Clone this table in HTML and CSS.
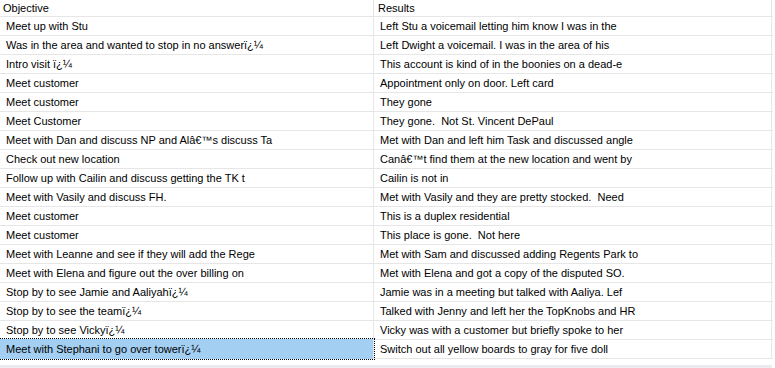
FILE: index.html
```html
<!DOCTYPE html>
<html>
<head>
<meta charset="utf-8">
<link rel="stylesheet" href="styles.css">
</head>
<body>
<div class="grid">
  <div class="row head"><div class="cell">Objective</div><div class="cell">Results</div></div>
  <div class="row"><div class="cell">Meet up with Stu</div><div class="cell">Left Stu a voicemail letting him know I was in the</div></div>
  <div class="row"><div class="cell">Was in the area and wanted to stop in no answerï¿¼</div><div class="cell">Left Dwight a voicemail. I was in the area of his</div></div>
  <div class="row"><div class="cell">Intro visit ï¿¼</div><div class="cell">This account is kind of in the boonies on a dead-e</div></div>
  <div class="row"><div class="cell">Meet customer</div><div class="cell">Appointment only on door. Left card</div></div>
  <div class="row"><div class="cell">Meet customer</div><div class="cell">They gone</div></div>
  <div class="row"><div class="cell">Meet Customer</div><div class="cell">They gone.  Not St. Vincent DePaul</div></div>
  <div class="row"><div class="cell">Meet with Dan and discuss NP and Alâ€™s discuss Ta</div><div class="cell">Met with Dan and left him Task and discussed angle</div></div>
  <div class="row"><div class="cell">Check out new location</div><div class="cell">Canâ€™t find them at the new location and went by</div></div>
  <div class="row"><div class="cell">Follow up with Cailin and discuss getting the TK t</div><div class="cell">Cailin is not in</div></div>
  <div class="row"><div class="cell">Meet with Vasily and discuss FH.</div><div class="cell">Met with Vasily and they are pretty stocked.  Need</div></div>
  <div class="row"><div class="cell">Meet customer</div><div class="cell">This is a duplex residential</div></div>
  <div class="row"><div class="cell">Meet customer</div><div class="cell">This place is gone.  Not here</div></div>
  <div class="row"><div class="cell">Meet with Leanne and see if they will add the Rege</div><div class="cell">Met with Sam and discussed adding Regents Park to</div></div>
  <div class="row"><div class="cell">Meet with Elena and figure out the over billing on</div><div class="cell">Met with Elena and got a copy of the disputed SO.</div></div>
  <div class="row"><div class="cell">Stop by to see Jamie and Aaliyahï¿¼</div><div class="cell">Jamie was in a meeting but talked with Aaliya. Lef</div></div>
  <div class="row"><div class="cell">Stop by to see the teamï¿¼</div><div class="cell">Talked with Jenny and left her the TopKnobs and HR</div></div>
  <div class="row"><div class="cell">Stop by to see Vickyï¿¼</div><div class="cell">Vicky was with a customer but briefly spoke to her</div></div>
  <div class="row"><div class="cell selected">Meet with Stephani to go over towerï¿¼</div><div class="cell">Switch out all yellow boards to gray for five doll</div></div>
</div>
<div class="scrollbar"></div>
</body>
</html>
```
FILE: styles.css
```css
html, body {
  margin: 0;
  padding: 0;
  background: #ffffff;
}
body {
  width: 775px;
  height: 368px;
  overflow: hidden;
  font-family: "Liberation Sans", Arial, sans-serif;
  font-size: 11px;
  color: #000000;
  display: flex;
  flex-direction: column;
}
.grid {
  width: 773px;
  height: 365px;
  border-right: 0;
}
.row {
  display: grid;
  grid-template-columns: 373px 399px;
  height: 18px;
  border-bottom: 1px solid #e6e6e6;
}
.row.head {
  height: 16px;
}
.cell {
  white-space: pre;
  overflow: hidden;
  line-height: 18px;
  padding-left: 6px;
  border-right: 1px solid #e6e6e6;
  box-sizing: border-box;
  width: 374px;
}
.cell + .cell {
  width: 399px;
  padding-left: 7px;
}
.head .cell {
  line-height: 16px;
  padding-left: 3px;
  border-right-color: #e3e3e3;
}
.head .cell + .cell {
  padding-left: 5px;
}
.cell.selected {
  background: #a3cff2;
  outline: 1px dotted #000000;
  outline-offset: 0;
  margin-top: -1px;
  height: 20px;
  line-height: 20px;
  margin-bottom: -1px;
}
.scrollbar {
  height: 3px;
  width: 772px;
  background: #ebebef;
}
```
